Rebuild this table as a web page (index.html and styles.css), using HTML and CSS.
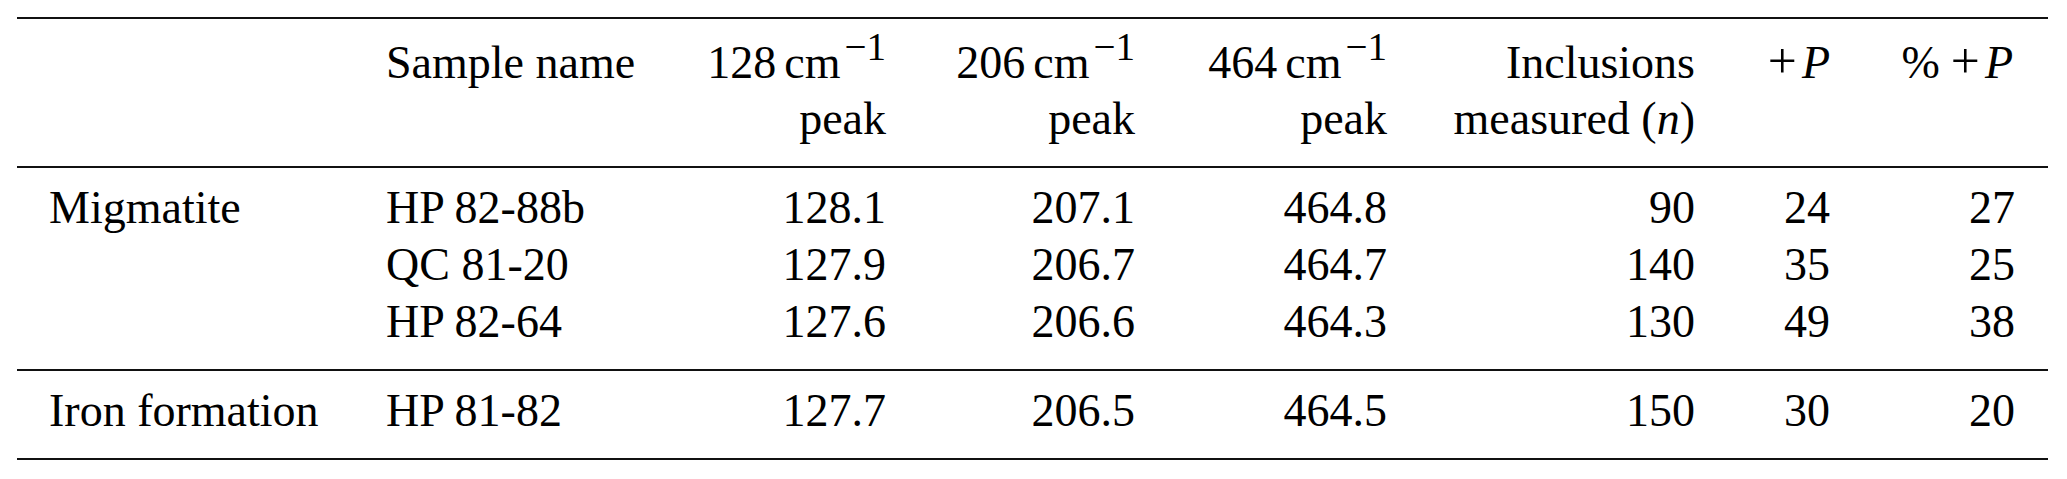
FILE: index.html
```html
<!DOCTYPE html>
<html lang="en">
<head>
<meta charset="utf-8">
<title>Raman peak positions</title>
<link rel="stylesheet" href="styles.css">
</head>
<body>
<table class="tbl">
  <colgroup>
    <col class="c1"><col class="c2"><col class="c3"><col class="c4">
    <col class="c5"><col class="c6"><col class="c7"><col class="c8">
  </colgroup>
  <thead>
    <tr>
      <th class="left"></th>
      <th class="left">Sample name</th>
      <th>128<span class="thin"></span>cm<sup class="sup">&minus;1</sup><br>peak</th>
      <th>206<span class="thin"></span>cm<sup class="sup">&minus;1</sup><br>peak</th>
      <th>464<span class="thin"></span>cm<sup class="sup">&minus;1</sup><br>peak</th>
      <th>Inclusions<br>measured&nbsp;(<i>n</i>)</th>
      <th class="ph"><span class="op">+</span><i class="mp">P</i></th>
      <th class="ph last">%<span class="pct"></span><span class="op">+</span><i class="mp">P</i></th>
    </tr>
  </thead>
  <tbody class="grp">
    <tr>
      <td class="left">Migmatite</td>
      <td class="left">HP 82-88b</td>
      <td>128.1</td><td>207.1</td><td>464.8</td><td>90</td><td>24</td><td class="last">27</td>
    </tr>
    <tr>
      <td class="left"></td>
      <td class="left">QC 81-20</td>
      <td>127.9</td><td>206.7</td><td>464.7</td><td>140</td><td>35</td><td class="last">25</td>
    </tr>
    <tr>
      <td class="left"></td>
      <td class="left">HP 82-64</td>
      <td>127.6</td><td>206.6</td><td>464.3</td><td>130</td><td>49</td><td class="last">38</td>
    </tr>
  </tbody>
  <tbody class="grp grp-end">
    <tr>
      <td class="left">Iron formation</td>
      <td class="left">HP 81-82</td>
      <td>127.7</td><td>206.5</td><td>464.5</td><td>150</td><td>30</td><td class="last">20</td>
    </tr>
  </tbody>
</table>
</body>
</html>
```

FILE: styles.css
```css
html, body {
  margin: 0;
  padding: 0;
  background: #ffffff;
}

body {
  font-family: "Liberation Serif", "Times New Roman", serif;
  font-size: 46px;
  color: #000000;
}

.tbl {
  margin: 17px 0 0 17px;
  width: 2031px;
  table-layout: fixed;
  border-collapse: separate;
  border-spacing: 0;
}

.c1 { width: 337px; }
.c2 { width: 313px; }
.c3 { width: 250px; }
.c4 { width: 249px; }
.c5 { width: 252px; }
.c6 { width: 308px; }
.c7 { width: 135px; }
.c8 { width: 187px; }

.tbl th,
.tbl td {
  padding: 0 31px;
  text-align: right;
  font-weight: normal;
  white-space: nowrap;
  box-sizing: border-box;
}

.tbl .left {
  text-align: left;
  padding-left: 32px;
}

.tbl .last {
  padding-right: 33px;
}

.tbl th {
  vertical-align: top;
  line-height: 56px;
  padding-top: 16px;
  padding-bottom: 19px;
  border-top: 2px solid #111111;
  border-bottom: 2px solid #111111;
}

.tbl td {
  line-height: 57px;
  vertical-align: baseline;
}

.grp tr:first-child td {
  padding-top: 11px;
}

.grp tr:last-child td {
  padding-bottom: 19px;
}

.grp + .grp tr:first-child td {
  border-top: 2px solid #111111;
}

.grp-end tr:last-child td {
  border-bottom: 2px solid #111111;
}

.thin {
  display: inline-block;
  width: 8px;
}

.pct {
  display: inline-block;
  width: 11px;
}

.sup {
  font-size: 0.85em;
  line-height: 0;
  vertical-align: baseline;
  position: relative;
  top: -0.47em;
  margin-left: 4px;
}

.op {
  font-size: 1.12em;
  line-height: 0;
}

.ph {
  padding-right: 35px;
}

.ph.last {
  padding-right: 35px;
}

.mp {
  margin-left: 5px;
}
```
